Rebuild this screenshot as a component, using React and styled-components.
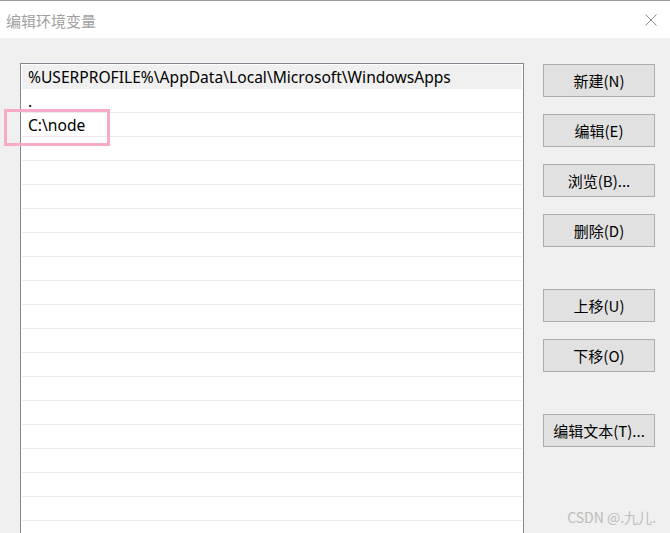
import React from "react";
import styled, { createGlobalStyle } from "styled-components";

const Global = createGlobalStyle`
  html, body { margin: 0; padding: 0; background: #f0f0f0; }
  * { box-sizing: border-box; }
`;

const Window = styled.div`
  position: relative;
  width: 670px;
  height: 533px;
  overflow: hidden;
  background: #f0f0f0;
  border-top: 1px solid #9a9a9a;
  font-family: "Noto Sans", "Noto Sans CJK SC", sans-serif;
`;

const TitleBar = styled.div`
  height: 37px;
  background: #ffffff;
  display: flex;
  align-items: center;
  justify-content: space-between;
  padding: 0 13px 0 6px;
`;

const Title = styled.span`
  font-family: "Noto Sans CJK SC", sans-serif;
  font-size: 15px;
  color: #a0a0a0;
  margin-top: 1px;
`;

const Body = styled.div`
  display: flex;
  align-items: flex-start;
  padding: 25px 15px 0 20px;
  gap: 19px;
`;

const ListBox = styled.div`
  width: 504px;
  height: 520px;
  flex: 0 0 auto;
  background: #ffffff;
  border: 1px solid #828790;
  border-bottom: none;
  padding: 1px 1px 0 1px;
  overflow: hidden;
`;

const Row = styled.div`
  height: 24px;
  display: flex;
  align-items: center;
  padding-left: 6px;
  font-size: 15.6px;
  color: #000;
  white-space: nowrap;
  background: ${(p) => (p.$selected ? "#f0f0f0" : "#ffffff")};
  border-bottom: 1px solid ${(p) => (p.$selected ? "#f0f0f0" : "#ebebeb")};
`;

const ButtonColumn = styled.div`
  display: flex;
  flex-direction: column;
  gap: 17px;
  margin-top: 1px;
`;

const Button = styled.button`
  width: 112px;
  height: 33px;
  margin-top: ${(p) => (p.$groupStart ? "25px" : "0")};
  background: #e1e1e1;
  border: 1px solid #adadad;
  border-radius: 0;
  font-family: "Noto Sans CJK SC", sans-serif;
  font-size: 15px;
  color: #000;
  padding: 0;
  display: flex;
  align-items: center;
  justify-content: center;
`;

const Highlight = styled.div`
  position: absolute;
  left: 4px;
  top: 108px;
  width: 106px;
  height: 37px;
  border: 3px solid #f8abc8;
  pointer-events: none;
`;

const Watermark = styled.div`
  position: absolute;
  right: 14px;
  bottom: 6px;
  font-family: "Noto Sans CJK SC", sans-serif;
  font-size: 14px;
  color: #bcbcbc;
`;

const rows = [
  "%USERPROFILE%\\AppData\\Local\\Microsoft\\WindowsApps",
  ".",
  "C:\\node",
  ...Array.from({ length: 19 }, () => ""),
];

const buttons = [
  { label: "新建(N)" },
  { label: "编辑(E)" },
  { label: "浏览(B)..." },
  { label: "删除(D)" },
  { label: "上移(U)", groupStart: true },
  { label: "下移(O)" },
  { label: "编辑文本(T)...", groupStart: true },
];

export default function App() {
  return (
    <>
      <Global />
      <Window>
        <TitleBar>
          <Title>编辑环境变量</Title>
          <svg width="12" height="12" viewBox="0 0 12 12">
            <path d="M0.5 0.5 L11.5 11.5 M11.5 0.5 L0.5 11.5" stroke="#8a8a8a" strokeWidth="1" fill="none" />
          </svg>
        </TitleBar>
        <Body>
          <ListBox>
            {rows.map((r, i) => (
              <Row key={i} $selected={i === 0}>
                {r}
              </Row>
            ))}
          </ListBox>
          <ButtonColumn>
            {buttons.map((b) => (
              <Button key={b.label} $groupStart={b.groupStart}>
                {b.label}
              </Button>
            ))}
          </ButtonColumn>
        </Body>
        <Highlight />
        <Watermark>CSDN @.九儿.</Watermark>
      </Window>
    </>
  );
}
